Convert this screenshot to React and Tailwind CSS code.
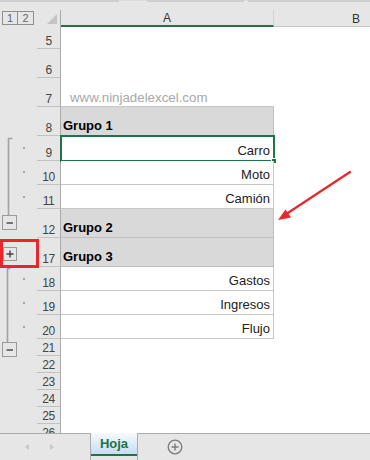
import React from "react";

const rows = [
  { n: 5, h: "h-[22px]" },
  { n: 6, h: "h-[29px]" },
  { n: 7, h: "h-[29px]", kind: "wm", text: "www.ninjadelexcel.com" },
  { n: 8, h: "h-[29px]", kind: "group", text: "Grupo 1" },
  { n: 9, h: "h-[25px]", kind: "data", text: "Carro", selected: true },
  { n: 10, h: "h-[24px]", kind: "data", text: "Moto" },
  { n: 11, h: "h-[24px]", kind: "data", text: "Camión" },
  { n: 12, h: "h-[29px]", kind: "group", text: "Grupo 2" },
  { n: 17, h: "h-[29px]", kind: "group", text: "Grupo 3" },
  { n: 18, h: "h-[24px]", kind: "data", text: "Gastos" },
  { n: 19, h: "h-[24px]", kind: "data", text: "Ingresos" },
  { n: 20, h: "h-[24px]", kind: "data", text: "Flujo" },
  { n: 21, h: "h-[17px]" },
  { n: 22, h: "h-[17px]" },
  { n: 23, h: "h-[17px]" },
  { n: 24, h: "h-[17px]" },
  { n: 25, h: "h-[17px]" },
  { n: 26, h: "h-[17px]" },
];

function CellA({ r }) {
  if (r.kind === "group") {
    return (
      <div className="relative w-[213px] h-full shrink-0 bg-[#d9d9d9] border-r border-b border-[#bfbfbf] flex items-end pl-[2px] pb-[3px] text-[13px] font-bold text-black leading-none">
        {r.text}
      </div>
    );
  }
  if (r.kind === "data") {
    return (
      <div className="relative w-[213px] h-full shrink-0 bg-white border-r border-b border-[#c6c6c6] flex items-end justify-end pr-[3px] pb-[3px] text-[13px] text-[#222] leading-none">
        {r.text}
        {r.selected && (
          <>
            <div className="absolute -left-[1px] -top-[1px] w-[215px] h-[27px] border-2 border-[#217346]" />
            <div className="absolute -right-[4px] -bottom-[4px] w-[6px] h-[6px] bg-[#217346] border border-white" />
          </>
        )}
      </div>
    );
  }
  if (r.kind === "wm") {
    return (
      <div className="w-[213px] h-full shrink-0 bg-white border-b border-[#c6c6c6] flex items-end pl-[9px] pb-[2px] text-[13.3px] text-[#a8a8a8] leading-none">
        {r.text}
      </div>
    );
  }
  return <div className="w-[213px] h-full shrink-0 bg-white" />;
}

export default function App() {
  return (
    <div className="relative w-[370px] h-[460px] overflow-hidden bg-[#e6e6e6] flex flex-col font-['Liberation_Sans',Arial,sans-serif]">
      {/* top strip */}
      <div className="h-[10px] shrink-0 flex">
        <div className="w-[119px] h-[2px] bg-[#cfcfcf]" />
        <div className="w-[28px] h-[1px] bg-[#dcdcdc]" />
        <div className="w-[97px] h-[2px] bg-[#cfcfcf]" />
        <div className="w-[4px] h-[1px] bg-[#dcdcdc]" />
        <div className="flex-1 h-[2px] bg-[#cfcfcf]" />
      </div>

      {/* column header */}
      <div className="h-[17px] shrink-0 flex">
        <div className="w-[37px] shrink-0 flex pl-[2px] pt-[1px]">
          <div className="w-[16px] h-[14px] border border-[#8e8e8e] flex items-center justify-center text-[11px] text-[#666] leading-none">1</div>
          <div className="w-[16px] h-[14px] border border-l-0 border-[#8e8e8e] flex items-center justify-center text-[11px] text-[#666] leading-none">2</div>
        </div>
        <div className="w-[24px] shrink-0 border-r border-[#ababab] flex items-end justify-end pr-[3px] pb-[3px]">
          <svg width="10" height="10" viewBox="0 0 10 10">
            <polygon points="10,0 10,10 0,10" fill="#c4c4c4" />
          </svg>
        </div>
        <div className="w-[213px] shrink-0 border-r border-[#d2d2d2] border-b-2 border-b-[#217346] flex items-center justify-center text-[12px] text-[#333] leading-none pt-[1px]">
          A
        </div>
        <div className="flex-1 border-b border-[#c6c6c6] flex items-center pl-[78px] text-[12px] text-[#333] leading-none pt-[1px]">
          B
        </div>
      </div>

      {/* body */}
      <div className="flex-1 flex min-h-0 overflow-hidden">
        <div className="relative w-[37px] shrink-0">
          <svg className="absolute left-0 top-0" width="37" height="406" viewBox="0 0 37 406">
            {/* group 1 */}
            <path d="M12.5 111.5 H8.5 V188" stroke="#a3a3a3" strokeWidth="1.6" fill="none" />
            <rect x="23" y="120" width="2" height="2" fill="#a8a8a8" />
            <rect x="23" y="144" width="2" height="2" fill="#a8a8a8" />
            <rect x="23" y="169" width="2" height="2" fill="#a8a8a8" />
            <rect x="2.5" y="188.5" width="14" height="14" fill="#e6e6e6" stroke="#9a9a9a" />
            <path d="M6.5 196 H13" stroke="#444" strokeWidth="1.4" />
            {/* collapsed group 2 */}
            <rect x="3.5" y="220.5" width="13" height="13" fill="#e6e6e6" stroke="#9a9a9a" />
            <path d="M6.5 227 H13.5 M10 223.5 V230.5" stroke="#444" strokeWidth="1.4" />
            {/* group 3 */}
            <path d="M10.5 241.5 H7.5 V315" stroke="#a3a3a3" strokeWidth="1.6" fill="none" />
            <rect x="23" y="251" width="2" height="2" fill="#a8a8a8" />
            <rect x="23" y="275" width="2" height="2" fill="#a8a8a8" />
            <rect x="23" y="299" width="2" height="2" fill="#a8a8a8" />
            <rect x="2.5" y="315.5" width="14" height="14" fill="#e6e6e6" stroke="#9a9a9a" />
            <path d="M6.5 323 H13" stroke="#444" strokeWidth="1.4" />
          </svg>
          <div className="absolute left-0 top-[212px] w-[39px] h-[29px] border-[3px] border-[#e8262b]" />
        </div>
        <div className="flex-1 flex flex-col">
          {rows.map((r) => (
            <div key={r.n} className={`${r.h} shrink-0 flex`}>
              <div className="w-[24px] h-full shrink-0 border-r border-r-[#ababab] border-b border-b-[#c2c2c2] flex items-end justify-center pb-[1px] text-[12px] tracking-[-0.5px] text-[#444] leading-none">
                {r.n}
              </div>
              <CellA r={r} />
              <div className="flex-1 h-full bg-white" />
            </div>
          ))}
        </div>
      </div>

      {/* sheet tabs */}
      <div className="relative h-[27px] shrink-0 flex bg-[#e6e6e6]">
        <div className="w-[91px] h-full border-t border-r border-[#ababab] flex items-center pl-[25px] gap-[21px] pb-[1px]">
          <svg width="4" height="6" viewBox="0 0 4 6">
            <polygon points="4,0 4,6 0,3" fill="#c8c8c8" />
          </svg>
          <svg width="4" height="6" viewBox="0 0 4 6">
            <polygon points="0,0 0,6 4,3" fill="#c8c8c8" />
          </svg>
        </div>
        <div className="w-[46px] h-full flex flex-col">
          <div className="h-[23px] bg-gradient-to-b from-[#f6fafd] to-[#c6ddf1] border-b-2 border-[#217346] flex items-center justify-center text-[13px] font-bold text-[#217346] leading-none">
            Hoja
          </div>
        </div>
        <div className="flex-1 h-full border-t border-l border-[#ababab] flex items-start pl-[29px] pt-[5px]">
          <svg width="16" height="16" viewBox="0 0 16 16">
            <circle cx="8" cy="8" r="6.8" fill="none" stroke="#7a7a7a" strokeWidth="1.3" />
            <path d="M8 4.5 V11.5 M4.5 8 H11.5" stroke="#7a7a7a" strokeWidth="1.4" />
          </svg>
        </div>
      </div>

      {/* red annotation arrow */}
      <svg className="absolute left-0 top-0 pointer-events-none" width="370" height="460" viewBox="0 0 370 460">
        <line x1="350" y1="172" x2="287" y2="213.5" stroke="#e8262b" strokeWidth="2.2" strokeLinecap="round" />
        <polygon points="278,220 291,217.5 285.5,209.5" fill="#e8262b" />
      </svg>
    </div>
  );
}
